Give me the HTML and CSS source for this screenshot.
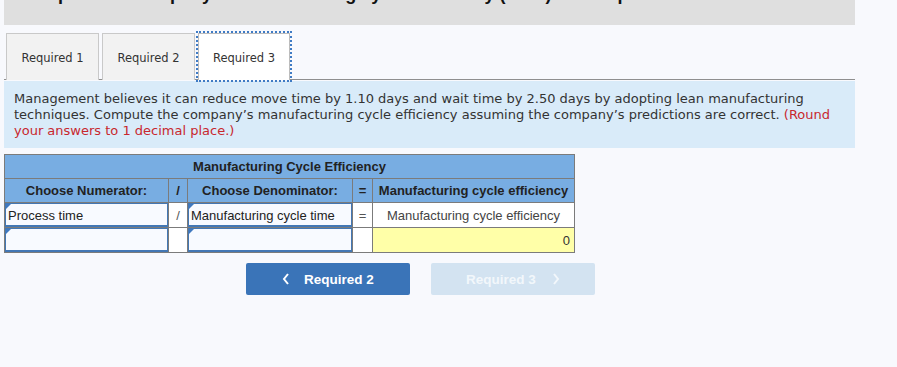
FILE: index.html
```html
<!DOCTYPE html>
<html lang="en">
<head>
  <meta charset="UTF-8">
  <meta name="viewport" content="width=device-width, initial-scale=1.0">
  <title>Manufacturing Cycle Efficiency</title>
  <link rel="stylesheet" href="styles.css">
</head>
<body>
  <!-- Question header (scrolled, only the bottom shows) -->
  <div class="topbar">
    <p>Compute the company's manufacturing cycle efficiency (MCE) for the period.</p>
  </div>

  <!-- Tabs -->
  <div class="tabs">
    <button class="tab">Required 1</button>
    <button class="tab">Required 2</button>
    <button class="tab active">Required 3</button>
  </div>

  <div class="prompt">
    Management believes it can reduce move time by 1.10 days and wait time by 2.50 days by adopting lean manufacturing
    techniques. Compute the company’s manufacturing cycle efficiency assuming the company’s predictions are correct.
    <span class="note">(Round your answers to 1 decimal place.)</span>
  </div>

  <!-- Answer table -->
  <table class="mce">
    <tr class="title">
      <th colspan="5">Manufacturing Cycle Efficiency</th>
    </tr>
    <tr class="heads">
      <th class="c-num">Choose Numerator:</th>
      <th class="c-op">/</th>
      <th class="c-den">Choose Denominator:</th>
      <th class="c-op2">=</th>
      <th class="c-res">Manufacturing cycle efficiency</th>
    </tr>
    <tr class="row">
      <td><div class="field">Process time</div></td>
      <td class="op">/</td>
      <td><div class="field">Manufacturing cycle time</div></td>
      <td class="op">=</td>
      <td class="label">Manufacturing cycle efficiency</td>
    </tr>
    <tr class="row">
      <td><div class="field"></div></td>
      <td class="op"></td>
      <td><div class="field"></div></td>
      <td class="op"></td>
      <td class="answer">0</td>
    </tr>
  </table>

  <div class="nav">
    <button class="nav-btn prev">
      <svg width="8" height="12" viewBox="0 0 8 12"><polyline points="6,1 2,6 6,11" fill="none" stroke="#fff" stroke-width="2"/></svg>
      <span>Required 2</span>
    </button>
    <button class="nav-btn next" disabled>
      <span>Required 3</span>
      <svg width="8" height="12" viewBox="0 0 8 12"><polyline points="2,1 6,6 2,11" fill="none" stroke="#f2f7fb" stroke-width="2"/></svg>
    </button>
  </div>
</body>
</html>
```

FILE: styles.css
```css
/* General */
body {
  margin: 0;
  background: #f8f9fd;
  font-family: "DejaVu Sans", Verdana, sans-serif;
  color: #333;
}

.topbar {
  margin: 0 42px 0 4px;
  height: 25px;
  background: #dfdfdf;
  overflow: hidden;
}

.topbar p {
  margin: -15px 0 0 14px;
  font-family: "Liberation Sans", Arial, sans-serif;
  font-size: 18px;
  font-weight: bold;
  line-height: 18px;
  color: #111;
  white-space: nowrap;
}

/* Tabs */
.tabs {
  display: flex;
  gap: 3px;
  margin: 8px 42px 0 4px;
  padding-left: 2px;
  border-bottom: 1px solid #8f8f8f;
}

.tab {
  width: 93px;
  height: 47px;
  margin-bottom: -1px;
  padding: 2px 0 0;
  background: #f2f2f2;
  border: 1px solid #c9c9c9;
  border-bottom: none;
  font-family: "DejaVu Sans", Verdana, sans-serif;
  font-size: 11.5px;
  color: #333;
}

.tab.active {
  width: 92px;
  background: #fff;
  border-color: #bcbcbc;
  outline: 2px dotted #3f7bc4;
  outline-offset: 0;
}

/* Prompt */
.prompt {
  margin: 1px 42px 0 4px;
  padding: 10px 20px 9px 10px;
  background: #d9ebf9;
  font-size: 13px;
  line-height: 16px;
  color: #333;
}

.note {
  color: #c8282e;
}

/* Table */
.mce {
  margin: 6px 0 0 4px;
  border-collapse: collapse;
  font-family: "Liberation Sans", Arial, sans-serif;
  font-size: 13px;
  color: #333;
}

.mce th,
.mce td {
  border: 1px solid #7b7b7b;
  padding: 0;
}

.mce th {
  background: #78ade2;
  color: #222;
  font-weight: bold;
  height: 23px;
}

.mce .c-num { width: 163px; }
.mce .c-op { width: 18px; }
.mce .c-den { width: 164px; }
.mce .c-op2 { width: 19px; }
.mce .c-res { width: 201px; }

.row td {
  height: 23px;
  background: #fff;
}

.field {
  position: relative;
  box-sizing: border-box;
  height: 24px;
  border: 1px solid #4377b4;
  border-bottom-width: 2px;
  padding: 4px 2px 0;
  background: #f8faff;
  color: #222;
  text-align: left;
}

/* little dropdown marker in the corner */
.field::before {
  content: "";
  position: absolute;
  top: 0;
  left: 0;
  border-top: 5px solid #3f78c0;
  border-right: 5px solid transparent;
}

.row td.op {
  text-align: center;
  color: #555;
}

.row td.label {
  text-align: center;
  color: #444;
}

.row td.answer {
  background: #ffffa8;
  text-align: right;
  padding-right: 4px;
  color: #333;
}

/* Bottom navigation */
.nav {
  display: flex;
  gap: 21px;
  margin-top: 10px;
  padding-left: 246px;
}

.nav-btn {
  display: flex;
  align-items: center;
  justify-content: center;
  gap: 14px;
  width: 164px;
  height: 32px;
  border: none;
  border-radius: 2px;
  font-family: "Liberation Sans", Arial, sans-serif;
  font-size: 13.5px;
  font-weight: bold;
  cursor: pointer;
}

.nav-btn.prev {
  background: #3a74b8;
  color: #fff;
}

.nav-btn.next {
  background: #d3e3f1;
  color: #f2f7fb;
  gap: 16px;
}
```
